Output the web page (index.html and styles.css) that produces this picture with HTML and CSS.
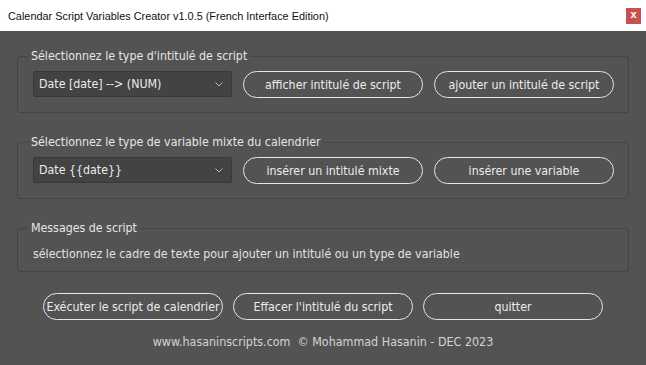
FILE: index.html
```html
<!DOCTYPE html>
<html lang="fr">
<head>
  <meta charset="UTF-8">
  <meta name="viewport" content="width=device-width, initial-scale=1.0">
  <title>Calendar Script Variables Creator</title>
  <link rel="stylesheet" href="styles.css">
</head>
<body>

  <div class="title-bar">
    <span class="title">Calendar Script Variables Creator v1.0.5 (French Interface Edition)</span>
    <span class="close-btn">x</span>
  </div>

  <div class="dialog">
    <fieldset class="panel">
      <legend>Sélectionnez le type d'intitulé de script</legend>
      <div class="row">
        <div class="dropdown">
          <span>Date [date] --&gt; (NUM)</span>
          <svg class="chevron" width="8" height="5" viewBox="0 0 8 5"><path d="M0.5 0.5 L4 4 L7.5 0.5" fill="none" stroke="#b8b8b8" stroke-width="1"/></svg>
        </div>
        <button class="pill">afficher intitulé de script</button>
        <button class="pill">ajouter un intitulé de script</button>
      </div>
    </fieldset>

    <fieldset class="panel">
      <legend>Sélectionnez le type de variable mixte du calendrier</legend>
      <div class="row">
        <div class="dropdown">
          <span>Date {{date}}</span>
          <svg class="chevron" width="8" height="5" viewBox="0 0 8 5"><path d="M0.5 0.5 L4 4 L7.5 0.5" fill="none" stroke="#b8b8b8" stroke-width="1"/></svg>
        </div>
        <button class="pill">insérer un intitulé mixte</button>
        <button class="pill">insérer une variable</button>
      </div>
    </fieldset>

    <fieldset class="panel messages">
      <legend>Messages de script</legend>
      <p class="message">sélectionnez le cadre de texte pour ajouter un intitulé ou un type de variable</p>
    </fieldset>

    <div class="actions">
      <button class="pill">Exécuter le script de calendrier</button>
      <button class="pill">Effacer l'intitulé du script</button>
      <button class="pill">quitter</button>
    </div>

    <p class="footer">www.hasaninscripts.com &nbsp;© Mohammad Hasanin - DEC 2023</p>
  </div>

</body>
</html>
```

FILE: styles.css
```css
* {
  box-sizing: border-box;
  margin: 0;
  padding: 0;
}

body {
  font-family: "DejaVu Sans Condensed", "Liberation Sans", sans-serif;
  background-color: #535353;
  color: #e2e2e2;
  width: 646px;
  height: 365px;
  overflow: hidden;
}

.title-bar {
  height: 31px;
  background: white;
  display: flex;
  align-items: center;
  justify-content: space-between;
  padding: 0 5px 0 8px;
}

.title {
  font-family: "Liberation Sans", Arial, sans-serif;
  font-size: 10.9px;
  color: #111;
}

.close-btn {
  width: 15px;
  height: 16px;
  background: #c75050;
  color: white;
  font-family: "Liberation Sans", Arial, sans-serif;
  font-size: 11px;
  font-weight: bold;
  display: flex;
  align-items: center;
  justify-content: center;
  line-height: 1;
  padding-bottom: 2px;
}

.dialog {
  padding-top: 17px;
}

.panel {
  margin: 0 17px 21px;
  border: 1px solid #444444;
  border-radius: 3px;
  padding: 7px 14px 14px 15px;
}

.panel legend {
  font-size: 12.3px;
  line-height: 16px;
  padding: 0 3px;
  margin-left: -5px;
  color: #e6e6e6;
}

.row {
  display: flex;
  gap: 11px;
}

.dropdown {
  width: 199px;
  height: 26px;
  background: #434343;
  border: 1px solid #383838;
  border-radius: 2px;
  display: flex;
  align-items: center;
  justify-content: space-between;
  padding: 0 8px 0 5px;
  font-size: 12.3px;
  color: #ececec;
}

.chevron {
  margin-top: 1px;
}

.pill {
  width: 180px;
  height: 27px;
  background: transparent;
  border: 1px solid #e6e6e6;
  border-radius: 14px;
  color: #ececec;
  font-family: inherit;
  font-size: 12.3px;
  white-space: nowrap;
  padding: 0;
  cursor: pointer;
}

.messages {
  padding: 10px 14px 8px 15px;
}

.message {
  font-size: 12.3px;
  line-height: 17px;
}

.actions {
  display: flex;
  justify-content: center;
  gap: 10px;
  margin-top: 21px;
}

.footer {
  text-align: center;
  font-size: 12.4px;
  color: #d4d4d4;
  margin-top: 14px;
}
```
